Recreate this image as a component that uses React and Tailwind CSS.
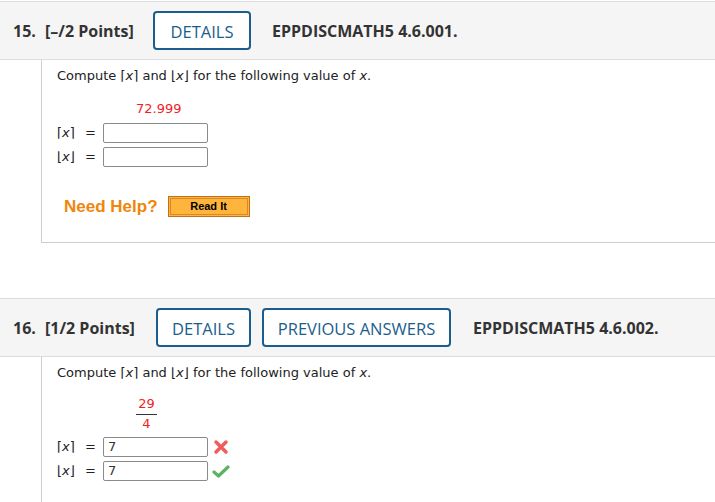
import React from "react";

const sans = { fontFamily: '"Open Sans", "Liberation Sans", sans-serif' };

function Ceil() {
  return (
    <span>
      ⌈<i>x</i>⌉
    </span>
  );
}

function Floor() {
  return (
    <span>
      ⌊<i>x</i>⌋
    </span>
  );
}

function Header({ num, points, code, prev }) {
  return (
    <div
      className="flex items-center h-[59px] bg-[#f5f5f5] border-t border-b border-[#dcdcdc] text-[16px] font-bold text-[#333]"
      style={sans}
    >
      <span className="pl-[13px] w-[45px]">{num}</span>
      <span className={prev ? "w-[111px]" : "w-[108px]"}>{points}</span>
      <div className="flex gap-[11px]">
        <button
          className={
            (prev ? "w-[95px]" : "w-[98px]") +
            " h-[39px] pt-[3px] border-2 border-[#1b5e8e] rounded-[4px] bg-white text-[#1b5e8e] font-normal text-[16.5px]"
          }
        >
          DETAILS
        </button>
        {prev && (
          <button className="w-[189px] h-[39px] pt-[3px] border-2 border-[#1b5e8e] rounded-[4px] bg-white text-[#1b5e8e] font-normal text-[16.5px]">
            PREVIOUS ANSWERS
          </button>
        )}
      </div>
      <span className={prev ? "ml-[22px]" : "ml-[21px]"}>{code}</span>
    </div>
  );
}

function Row({ label, value, mark }) {
  return (
    <div className="flex items-center h-[24px]">
      <span className="w-[28px]">{label}</span>
      <span className="w-[18px]">=</span>
      <div className="w-[105px] h-[20px] border border-[#8a8a8a] rounded-[2px] bg-white px-[4px] leading-[18px] text-[#333]">
        {value}
      </div>
      {mark === "x" && (
        <svg width="16" height="16" viewBox="0 0 16 16" className="ml-[5px]">
          <path d="M3 3 L13 13 M13 3 L3 13" stroke="#f05b5b" strokeWidth="3.5" strokeLinecap="round" />
        </svg>
      )}
      {mark === "ok" && (
        <svg width="18" height="16" viewBox="0 0 18 16" className="ml-[4px]">
          <path d="M2 9 L6.5 13 L16 4" fill="none" stroke="#5db35d" strokeWidth="3.2" strokeLinecap="round" strokeLinejoin="round" />
        </svg>
      )}
    </div>
  );
}

export default function App() {
  const body = { fontFamily: '"DejaVu Sans", Verdana, sans-serif' };
  return (
    <div className="w-[715px] h-[502px] bg-white overflow-hidden pt-[1px]">
      <Header num="15." points="[–/2 Points]" code="EPPDISCMATH5 4.6.001." />
      <div className="ml-[41px] border-l border-b border-[#cfcfcf] h-[183px] pl-[15px] pt-[6px] text-[13px] text-[#222]" style={body}>
        <div>
          Compute <Ceil /> and <Floor /> for the following value of <i>x</i>.
        </div>
        <div className="pl-[79px] pt-[13px] text-[#f01e1e]">72.999</div>
        <div className="pt-[3px]">
          <Row label={<Ceil />} />
          <Row label={<Floor />} />
        </div>
        <div className="flex items-center mt-[25px] pl-[7px]">
          <span className="text-[17px] font-bold text-[#f0850a]" style={{ fontFamily: '"Liberation Sans", Arial, sans-serif' }}>
            Need Help?
          </span>
          <button
            className="ml-[10px] w-[82px] h-[21px] border border-[#c0701c] bg-[#ffb43c] p-[1px]"
            style={{ fontFamily: '"Liberation Sans", Arial, sans-serif' }}
          >
            <div className="h-full border border-[#d9892a] text-[11px] font-bold text-black leading-[15px]">Read It</div>
          </button>
        </div>
      </div>
      <div className="h-[55px]" />
      <Header num="16." points="[1/2 Points]" code="EPPDISCMATH5 4.6.002." prev />
      <div className="ml-[41px] border-l border-[#cfcfcf] h-[150px] pl-[15px] pt-[6px] text-[13px] text-[#222]" style={body}>
        <div>
          Compute <Ceil /> and <Floor /> for the following value of <i>x</i>.
        </div>
        <div className="ml-[79px] w-[21px] pt-[14px] text-[#f01e1e] text-center">
          <div className="leading-[14px]">29</div>
          <div className="border-t border-[#333] mt-[3px]" />
          <div className="leading-[14px] mt-[2px]">4</div>
        </div>
        <div className="pt-[4px]">
          <Row label={<Ceil />} value="7" mark="x" />
          <Row label={<Floor />} value="7" mark="ok" />
        </div>
      </div>
    </div>
  );
}
